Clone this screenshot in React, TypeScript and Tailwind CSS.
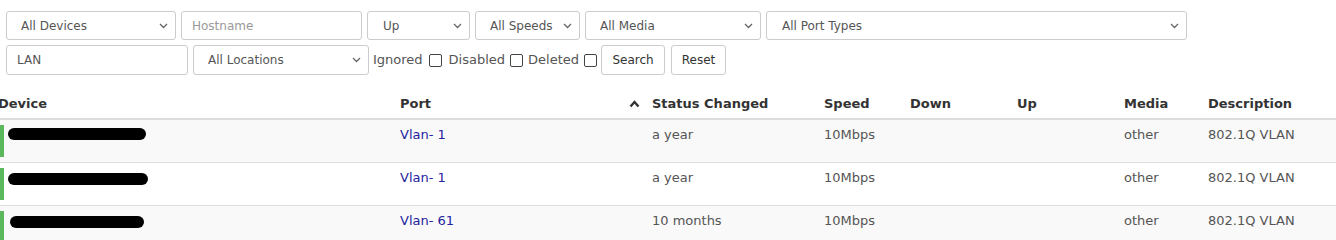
import React from "react";

const font = { fontFamily: '"DejaVu Sans", Verdana, sans-serif' };

function Chevron() {
  return (
    <svg width="9" height="6" viewBox="0 0 9 6" className="shrink-0">
      <polyline points="1,1 4.5,4.5 8,1" fill="none" stroke="#666" strokeWidth="1.3" />
    </svg>
  );
}

function Select({ label, w, pl = "pl-[14px]" }: { label: string; w: string; pl?: string }) {
  return (
    <div
      className={`${w} h-full flex items-center justify-between ${pl} pr-[7px] border border-[#ccc] rounded-[3px] bg-white text-[12px] text-[#555]`}
    >
      <span>{label}</span>
      <Chevron />
    </div>
  );
}

function Input({ text, w, placeholder }: { text: string; w: string; placeholder?: boolean }) {
  return (
    <div
      className={`${w} h-full flex items-center pl-[10px] border border-[#ccc] rounded-[3px] bg-white text-[12px] ${
        placeholder ? "text-[#999]" : "text-[#555]"
      }`}
    >
      {text}
    </div>
  );
}

function Check() {
  return <span className="inline-block w-[13px] h-[13px] border border-[#444] rounded-[2px] bg-white" />;
}

function Button({ label, w }: { label: string; w: string }) {
  return (
    <div
      className={`${w} h-full flex items-center justify-center border border-[#ccc] rounded-[3px] bg-white text-[12px] text-[#333]`}
    >
      {label}
    </div>
  );
}

const cols = "grid grid-cols-[402px_252px_172px_86px_107px_107px_84px_160px] ml-[-10px]";

const rows = [
  { port: "Vlan- 1", status: "a year", blob: "ml-[8px] w-[138px] mt-[3px]", bg: "bg-[#f9f9f9]" },
  { port: "Vlan- 1", status: "a year", blob: "ml-[8px] w-[140px] mt-[5px]", bg: "bg-white" },
  { port: "Vlan- 61", status: "10 months", blob: "ml-[10px] w-[134px] mt-[5px]", bg: "bg-[#f9f9f9]" },
];

export default function App() {
  return (
    <div className="w-[1336px] h-[240px] overflow-hidden bg-white" style={font}>
      <div className="pt-[11px] pl-[6px]">
        <div className="flex gap-[5px] h-[29px]">
          <Select label="All Devices" w="w-[170px]" />
          <Input text="Hostname" w="w-[181px]" placeholder />
          <Select label="Up" w="w-[103px]" pl="pl-[15px]" />
          <Select label="All Speeds" w="w-[105px]" pl="pl-[14px]" />
          <Select label="All Media" w="w-[176px]" pl="pl-[14px]" />
          <Select label="All Port Types" w="w-[421px]" pl="pl-[15px]" />
        </div>
        <div className="flex items-center h-[30px] mt-[5px] text-[13px] text-[#555]">
          <Input text="LAN" w="w-[182px]" />
          <div className="w-[5px]" />
          <Select label="All Locations" w="w-[176px]" />
          <span className="ml-[4px]">Ignored</span>
          <span className="ml-[6px] flex"><Check /></span>
          <span className="ml-[7px]">Disabled</span>
          <span className="ml-[5px] flex"><Check /></span>
          <span className="ml-[5px]">Deleted</span>
          <span className="ml-[5px] flex"><Check /></span>
          <div className="ml-[4px] h-full flex gap-[6px]">
            <Button label="Search" w="w-[64px]" />
            <Button label="Reset" w="w-[55px]" />
          </div>
        </div>
      </div>

      <div className="mt-[8px]">
        <div className={`${cols} h-[37px] border-b-2 border-[#ddd] text-[13px] font-bold text-[#333]`}>
          <div className="flex items-end pb-[5px] pl-[8px]">Device</div>
          <div className="flex items-end justify-between pb-[5px] pl-[8px] pr-[4px]">
            <span>Port</span>
            <svg width="11" height="8" viewBox="0 0 11 8" className="mb-[5px]">
              <polyline points="1.5,6.5 5.5,2 9.5,6.5" fill="none" stroke="#333" strokeWidth="2.4" />
            </svg>
          </div>
          <div className="flex items-end pb-[5px] pl-[8px]">Status Changed</div>
          <div className="flex items-end pb-[5px] pl-[8px]">Speed</div>
          <div className="flex items-end pb-[5px] pl-[8px]">Down</div>
          <div className="flex items-end pb-[5px] pl-[8px]">Up</div>
          <div className="flex items-end pb-[5px] pl-[8px]">Media</div>
          <div className="flex items-end pb-[5px] pl-[8px]">Description</div>
        </div>
        {rows.map((r, i) => (
          <div key={i} className={`${r.bg} border-b border-[#ddd] h-[43px] flex relative text-[13px] text-[#555]`}>
            <div className="absolute left-0 top-[5px] w-[4px] h-[32px] bg-[#5cb85c]" />
            <div className={cols + " w-full"}>
              <div className="pl-[10px] pt-[5px]">
                <div className={`${r.blob} h-[12px] rounded-full bg-black`} />
              </div>
              <div className="pl-[8px] pt-[5px] leading-[20px] text-[#2424a0]">{r.port}</div>
              <div className="pl-[8px] pt-[5px] leading-[20px]">{r.status}</div>
              <div className="pl-[8px] pt-[5px] leading-[20px]">10Mbps</div>
              <div />
              <div />
              <div className="pl-[8px] pt-[5px] leading-[20px]">other</div>
              <div className="pl-[8px] pt-[5px] leading-[20px]">802.1Q VLAN</div>
            </div>
          </div>
        ))}
      </div>
    </div>
  );
}
